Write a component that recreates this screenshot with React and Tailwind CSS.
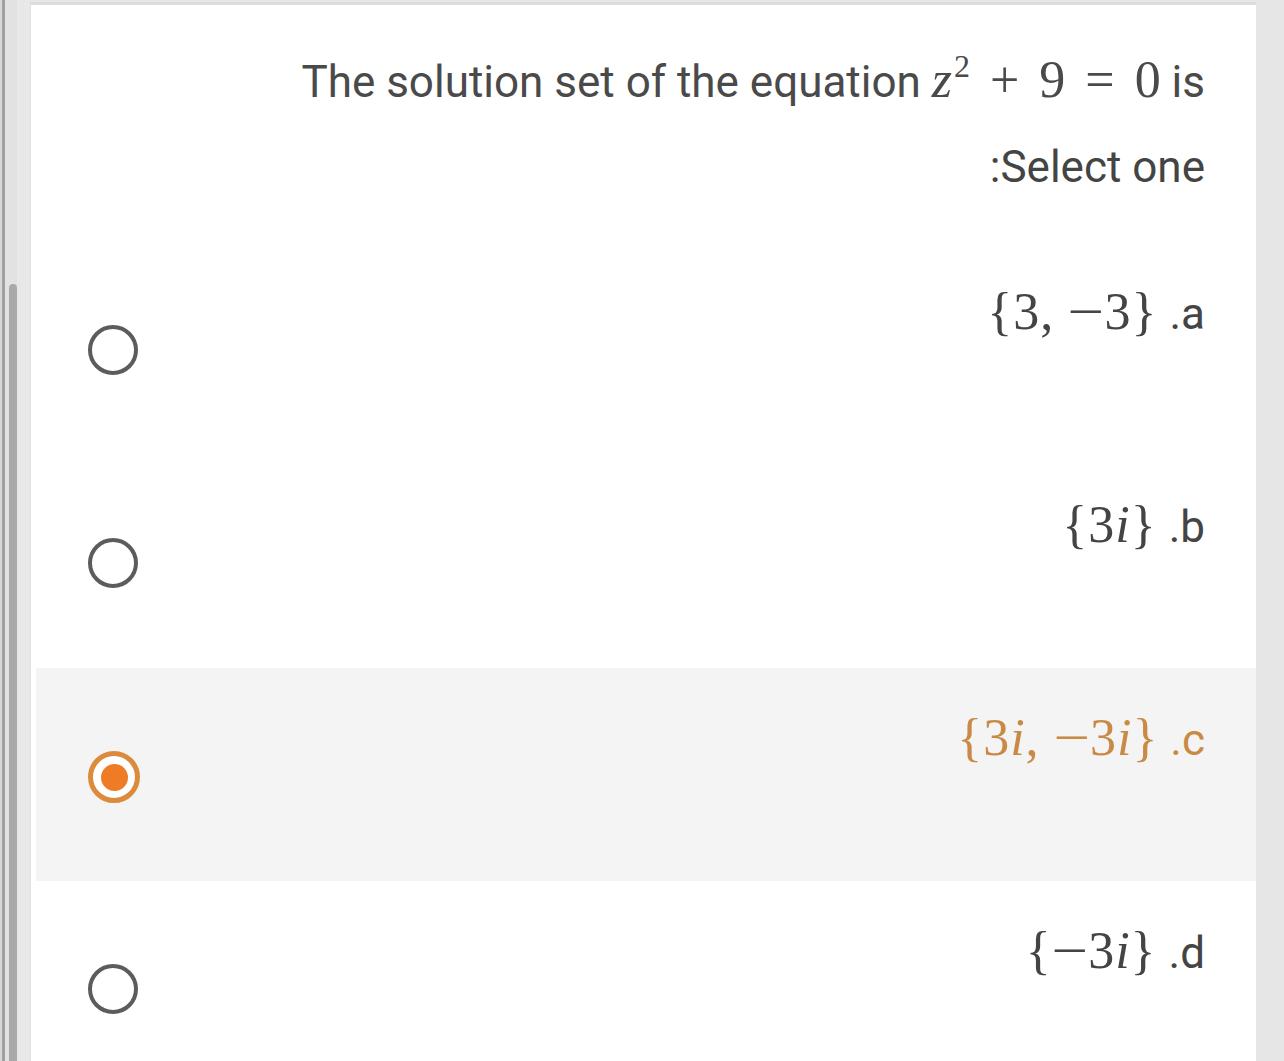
import React from "react";

const sans = { fontFamily: "Roboto, 'Liberation Sans', sans-serif" };

function M({ children, className = "" }) {
  return (
    <span className={"text-[52px] " + className} style={{ fontFamily: "'Liberation Serif', 'DejaVu Serif', serif" }}>
      {children}
    </span>
  );
}
function I({ children }) {
  return <span className="italic">{children}</span>;
}
function Op({ children }) {
  return <span className="mx-[20px]">{children}</span>;
}
function Minus() {
  return <span className="inline-block scale-x-125 mx-[3px]">{"\u2212"}</span>;
}

function Radio({ selected }) {
  if (selected) {
    return (
      <div className="w-[52px] h-[52px] rounded-full border-[5px] border-[#dc8a3c] bg-white flex items-center justify-center">
        <div className="w-[27px] h-[27px] rounded-full bg-[#f07b26]" />
      </div>
    );
  }
  return <div className="w-[50px] h-[50px] rounded-full border-[4px] border-[#5c5c5c] bg-white" />;
}

function Row({ label, math, selected }) {
  return (
    <div className={"h-[213px] flex justify-between " + (selected ? "bg-[#f4f4f4] ml-[5px]" : "")}>
      <div className={"pt-[83px] " + (selected ? "pl-[52px]" : "pl-[57px]")}>
        <Radio selected={selected} />
      </div>
      <div
        className={"pr-[51px] pt-[40px] leading-[60px] flex items-baseline gap-[12px] " + (selected ? "text-[#c98a45]" : "text-[#444]")}
      >
        <M className="tracking-[1px]">{math}</M>
        <span className="text-[44px]" style={sans}>{label}</span>
      </div>
    </div>
  );
}

export default function App() {
  return (
    <div className="w-[1284px] h-[1061px] overflow-hidden flex bg-[#e6e6e6]">
      <div className="w-[30px] h-full flex shrink-0">
        <div className="w-[2px] bg-[#d8d8d8]" />
        <div className="w-[3px] bg-[#a0a0a0]" />
        <div className="w-[4px] bg-[#e2e2e2]" />
        <div className="w-[8px] flex flex-col bg-[#e2e2e2]">
          <div className="h-[284px]" />
          <div className="flex-1 bg-[#a9a9a9] rounded-t-[4px]" />
        </div>
        <div className="flex-1 bg-[#e8e8e8]" />
      </div>
      <div className="w-[1226px] h-full bg-white border-t-[3px] border-[#dcdcdc] flex flex-col mt-[2px] border-l border-l-[#e0e0e0]">
        <div className="pr-[51px] text-right text-[#444]" style={sans}>
          <div className="pt-[43px] leading-[64px] text-[44px] text-[#4a4a4a] whitespace-nowrap">
            The solution set of the equation{" "}
            <M>
              <I>z</I>
              <sup className="text-[32px] -top-[20px] ml-[2px]">2</sup>
              <Op>+</Op>9<Op>=</Op>0
            </M>{" "}
            is
          </div>
          <div className="pt-[25px] leading-[56px] text-[44px]">:Select one</div>
        </div>
        <div className="mt-[47px]">
          <Row math={<>{"{3, "}<Minus />{"3}"}</>} label=".a" />
          <Row math={<>{"{3"}<I>i</I>{"}"}</>} label=".b" />
          <Row math={<>{"{3"}<I>i</I>{", "}<Minus />{"3"}<I>i</I>{"}"}</>} label=".c" selected />
          <Row math={<>{"{"}<Minus />{"3"}<I>i</I>{"}"}</>} label=".d" />
        </div>
      </div>
    </div>
  );
}
